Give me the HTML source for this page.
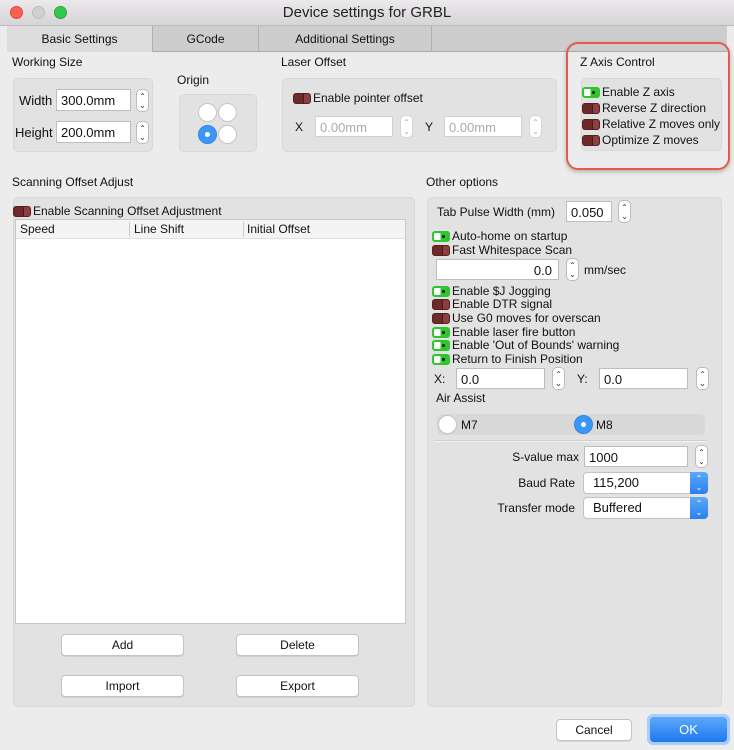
<!DOCTYPE html>
<html><head><meta charset="utf-8"><style>
*{box-sizing:border-box}
body{margin:0;width:734px;height:750px;background:#ececec;font-family:"Liberation Sans",sans-serif;font-size:12px;color:#111;position:relative;overflow:hidden}
.a{position:absolute;white-space:nowrap}
.t{position:absolute;white-space:nowrap;line-height:14px}
.box{position:absolute;background:#e2e2e2;border:1px solid #d8d8d8;border-radius:5px}
.in{position:absolute;background:#fff;border:1px solid #bdbdbd;padding:3px 3px 0 4px;font-size:13px;line-height:15px}
.dis{color:#aaa;border-color:#d0d0d0}
.st{position:absolute;width:13px;height:23px;background:#fff;border:1px solid #bbb;border-radius:5px;font-size:8px;line-height:9px;text-align:center;color:#333;padding-top:2px}
.btn{position:absolute;background:#fff;border:1px solid #c3c3c3;border-radius:4px;text-align:center;line-height:20px;font-size:12px;box-shadow:0 1px 0 rgba(0,0,0,.08)}
.on,.off{position:absolute;width:18px;height:11px;border-radius:3px}
.on{border:2px solid #2ec52e;background:linear-gradient(90deg,#fff 45%,#2ec52e 45%)}
.on:after{content:"";position:absolute;right:3px;top:2px;width:3px;height:3px;border-radius:2px;background:#111}
.off{background:#6e2a2a;border:1px solid #5a1f1f}
.off:after{content:"";position:absolute;right:0;top:0;width:6px;height:9px;border-radius:0 2px 2px 0;background:#8a4040;border-left:1px solid #4a1818}
.rad{position:absolute;width:19px;height:19px;border-radius:50%;background:#fff;border:1px solid #c5c5c5}
.sel{background:#3b97f5;border-color:#2f86e8}
.sel:after{content:"";position:absolute;left:6px;top:6px;width:5px;height:5px;border-radius:50%;background:#fff}
.cb{position:absolute;background:#fff;border:1px solid #c3c3c3;border-radius:4px;padding-left:9px;font-size:13px;line-height:20px}
.cb b{position:absolute;right:-1px;top:-1px;width:18px;height:22px;background:linear-gradient(#5aa9f8,#2b7ff0);border-radius:0 4px 4px 0;color:#fff;font-size:8px;line-height:9px;text-align:center;padding-top:2px;font-weight:normal}
</style></head><body>
<div class="a" style="left:0;top:0;width:734px;height:26px;background:linear-gradient(#ebe9eb,#d6d4d6);border-bottom:1px solid #bcbcbc"></div>
<div class="a" style="left:10px;top:6px;width:13px;height:13px;border-radius:50%;background:#fc5f57;border:1px solid #e0443e"></div>
<div class="a" style="left:32px;top:6px;width:13px;height:13px;border-radius:50%;background:#d0d0d0;border:1px solid #bdbdbd"></div>
<div class="a" style="left:54px;top:6px;width:13px;height:13px;border-radius:50%;background:#34c84a;border:1px solid #24a83a"></div>
<div class="a" style="left:0;top:4px;width:734px;text-align:center;font-size:15px;color:#222">Device settings for GRBL</div>
<div class="a" style="left:7px;top:26px;width:720px;height:26px;background:#cdcdcd;border-bottom:1px solid #a8a8a8"></div>
<div class="a" style="left:7px;top:26px;width:146px;height:26px;background:#dcdcdc;border-right:1px solid #b0b0b0;text-align:center;line-height:26px">Basic Settings</div>
<div class="a" style="left:153px;top:26px;width:106px;height:26px;border-right:1px solid #b0b0b0;text-align:center;line-height:26px">GCode</div>
<div class="a" style="left:259px;top:26px;width:173px;height:26px;border-right:1px solid #b0b0b0;text-align:center;line-height:26px">Additional Settings</div>

<div class="t" style="left:12px;top:55px">Working Size</div>
<div class="box" style="left:13px;top:78px;width:140px;height:74px"></div>
<div class="t" style="left:19px;top:94px;font-size:13px">Width</div>
<div class="in" style="left:56px;top:89px;width:75px;height:22px">300.0mm</div>
<div class="st" style="left:136px;top:89px">&#8963;<br>&#8964;</div>
<div class="t" style="left:15px;top:126px;font-size:13px">Height</div>
<div class="in" style="left:56px;top:121px;width:75px;height:22px">200.0mm</div>
<div class="st" style="left:136px;top:121px">&#8963;<br>&#8964;</div>

<div class="t" style="left:177px;top:73px">Origin</div>
<div class="box" style="left:179px;top:94px;width:78px;height:58px"></div>
<div class="rad" style="left:198px;top:103px"></div>
<div class="rad" style="left:218px;top:103px"></div>
<div class="rad sel" style="left:198px;top:125px"></div>
<div class="rad" style="left:218px;top:125px"></div>

<div class="t" style="left:281px;top:55px">Laser Offset</div>
<div class="box" style="left:282px;top:78px;width:275px;height:74px"></div>
<div class="off" style="left:293px;top:93px"></div>
<div class="t" style="left:313px;top:91px">Enable pointer offset</div>
<div class="t" style="left:295px;top:120px">X</div>
<div class="in dis" style="left:315px;top:116px;width:78px;height:21px">0.00mm</div>
<div class="st" style="left:400px;top:115px;border-color:#d5d5d5;color:#aaa">&#8963;<br>&#8964;</div>
<div class="t" style="left:425px;top:120px">Y</div>
<div class="in dis" style="left:444px;top:116px;width:78px;height:21px">0.00mm</div>
<div class="st" style="left:529px;top:115px;border-color:#d5d5d5;color:#aaa">&#8963;<br>&#8964;</div>

<div class="a" style="left:566px;top:42px;width:164px;height:128px;border:2px solid #e8584e;border-radius:12px;box-shadow:0 2px 4px rgba(0,0,0,.25)"></div>
<div class="t" style="left:580px;top:55px">Z Axis Control</div>
<div class="box" style="left:581px;top:78px;width:141px;height:73px"></div>
<div class="on" style="left:582px;top:87px"></div><div class="t" style="left:602px;top:85px">Enable Z axis</div>
<div class="off" style="left:582px;top:103px"></div><div class="t" style="left:602px;top:101px">Reverse Z direction</div>
<div class="off" style="left:582px;top:119px"></div><div class="t" style="left:602px;top:117px">Relative Z moves only</div>
<div class="off" style="left:582px;top:135px"></div><div class="t" style="left:602px;top:133px">Optimize Z moves</div>

<div class="t" style="left:12px;top:175px">Scanning Offset Adjust</div>
<div class="box" style="left:13px;top:197px;width:402px;height:510px"></div>
<div class="off" style="left:13px;top:206px"></div>
<div class="t" style="left:33px;top:204px">Enable Scanning Offset Adjustment</div>
<div class="a" style="left:15px;top:219px;width:391px;height:405px;background:#fff;border:1px solid #c8c8c8"></div>
<div class="a" style="left:16px;top:220px;width:389px;height:19px;background:#f4f4f4;border-bottom:1px solid #e0e0e0"></div>
<div class="a" style="left:129px;top:222px;width:1px;height:15px;background:#ccc"></div>
<div class="a" style="left:243px;top:222px;width:1px;height:15px;background:#ccc"></div>
<div class="t" style="left:20px;top:222px">Speed</div>
<div class="t" style="left:134px;top:222px">Line Shift</div>
<div class="t" style="left:247px;top:222px">Initial Offset</div>
<div class="btn" style="left:61px;top:634px;width:123px;height:22px">Add</div>
<div class="btn" style="left:236px;top:634px;width:123px;height:22px">Delete</div>
<div class="btn" style="left:61px;top:675px;width:123px;height:22px">Import</div>
<div class="btn" style="left:236px;top:675px;width:123px;height:22px">Export</div>

<div class="t" style="left:426px;top:175px">Other options</div>
<div class="box" style="left:427px;top:197px;width:295px;height:510px"></div>
<div class="t" style="left:437px;top:205px">Tab Pulse Width (mm)</div>
<div class="in" style="left:566px;top:201px;width:46px;height:21px">0.050</div>
<div class="st" style="left:618px;top:200px">&#8963;<br>&#8964;</div>
<div class="on" style="left:432px;top:231px"></div><div class="t" style="left:452px;top:229px">Auto-home on startup</div>
<div class="off" style="left:432px;top:245px"></div><div class="t" style="left:452px;top:243px">Fast Whitespace Scan</div>
<div class="in" style="left:436px;top:259px;width:123px;height:21px;text-align:right;padding-right:6px">0.0</div>
<div class="st" style="left:566px;top:258px">&#8963;<br>&#8964;</div>
<div class="t" style="left:584px;top:263px">mm/sec</div>
<div class="on" style="left:432px;top:286px"></div><div class="t" style="left:452px;top:284px">Enable $J Jogging</div>
<div class="off" style="left:432px;top:299px"></div><div class="t" style="left:452px;top:297px">Enable DTR signal</div>
<div class="off" style="left:432px;top:313px"></div><div class="t" style="left:452px;top:311px">Use G0 moves for overscan</div>
<div class="on" style="left:432px;top:327px"></div><div class="t" style="left:452px;top:325px">Enable laser fire button</div>
<div class="on" style="left:432px;top:340px"></div><div class="t" style="left:452px;top:338px">Enable 'Out of Bounds' warning</div>
<div class="on" style="left:432px;top:354px"></div><div class="t" style="left:452px;top:352px">Return to Finish Position</div>
<div class="t" style="left:434px;top:372px">X:</div>
<div class="in" style="left:456px;top:368px;width:89px;height:21px">0.0</div>
<div class="st" style="left:552px;top:367px">&#8963;<br>&#8964;</div>
<div class="t" style="left:577px;top:372px">Y:</div>
<div class="in" style="left:599px;top:368px;width:89px;height:21px">0.0</div>
<div class="st" style="left:696px;top:367px">&#8963;<br>&#8964;</div>
<div class="t" style="left:436px;top:391px">Air Assist</div>
<div class="a" style="left:437px;top:414px;width:268px;height:21px;background:#d8d8d8;border-radius:5px"></div>
<div class="rad" style="left:438px;top:415px"></div><div class="t" style="left:461px;top:418px">M7</div>
<div class="rad sel" style="left:574px;top:415px"></div><div class="t" style="left:596px;top:418px">M8</div>
<div class="a" style="left:434px;top:440px;width:274px;height:2px;border-top:1px solid #cfcfcf;border-bottom:1px solid #f4f4f4"></div>
<div class="t" style="left:460px;top:450px;width:119px;text-align:right">S-value max</div>
<div class="in" style="left:584px;top:446px;width:104px;height:21px">1000</div>
<div class="st" style="left:695px;top:445px">&#8963;<br>&#8964;</div>
<div class="t" style="left:460px;top:476px;width:115px;text-align:right">Baud Rate</div>
<div class="cb" style="left:583px;top:472px;width:125px;height:22px">115,200<b>&#8963;<br>&#8964;</b></div>
<div class="t" style="left:460px;top:501px;width:115px;text-align:right">Transfer mode</div>
<div class="cb" style="left:583px;top:497px;width:125px;height:22px">Buffered<b>&#8963;<br>&#8964;</b></div>

<div class="btn" style="left:556px;top:719px;width:76px;height:22px">Cancel</div>
<div class="a" style="left:647px;top:714px;width:83px;height:31px;border-radius:6px;background:#a9cdf6"></div>
<div class="a" style="left:650px;top:717px;width:77px;height:25px;border-radius:4px;background:linear-gradient(#5aaaf9,#1f78f0);color:#fff;text-align:center;line-height:25px;font-size:13px">OK</div>
</body></html>
